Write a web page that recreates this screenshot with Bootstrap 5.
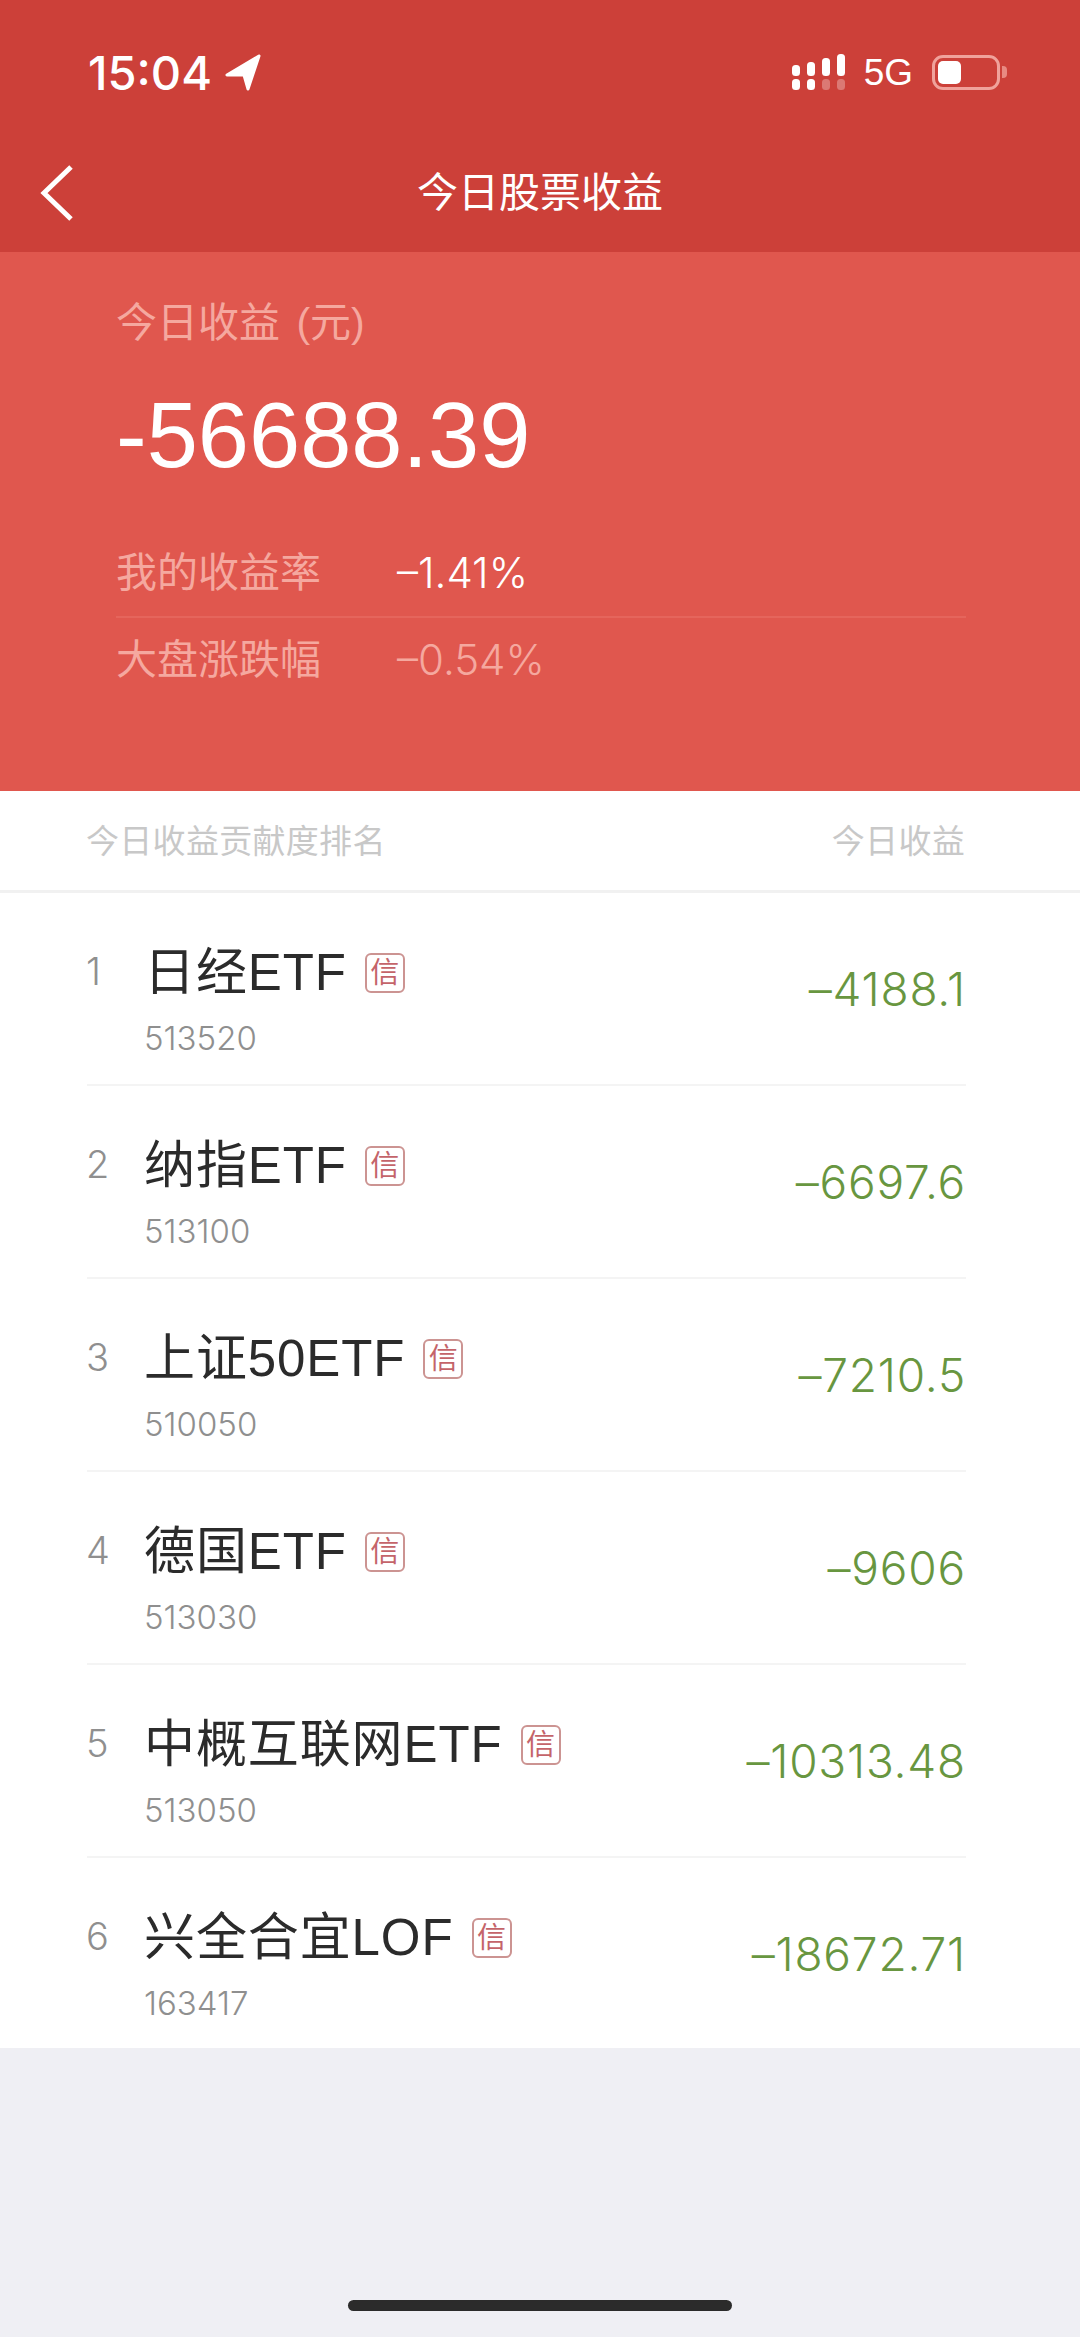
<!DOCTYPE html>
<html lang="zh-CN">
<head>
    <meta charset="UTF-8">
    <meta name="viewport" content="width=device-width, initial-scale=1.0">
    <title>今日股票收益</title>
    <link href="https://cdn.jsdelivr.net/npm/bootstrap@5.3.0/dist/css/bootstrap.min.css" rel="stylesheet">
    <style>
        body { background: #efeff4; font-family: "Liberation Sans", "Noto Sans CJK SC", sans-serif; height: 2337px; overflow: hidden; }
        .top-red { background: #cc4039; height: 252px; color: #fff; }
        .status-line { height: 144px; padding: 0 73px 0 88px; }
        .clock { font-family: Inter, "Liberation Sans", sans-serif; font-size: 47px; font-weight: 500; line-height: 1; }
        .arrow-mark { margin-left: 11px; }
        .net-type { font-size: 37px; line-height: 1; margin: 0 19px 0 16px; }
        .batt { width: 68px; height: 35px; border: 3px solid #f0a29b; border-radius: 11px; padding: 3px; }
        .batt-level { width: 23px; background: #fff; border-radius: 5px; }
        .batt-nub { width: 5px; height: 12px; background: #e88a82; border-radius: 0 4px 4px 0; margin-left: 2px; }
        .nav-line { height: 108px; padding-bottom: 10px; }
        .back-btn { left: 40px; top: 21px; }
        .nav-title { font-size: 41px; line-height: 1; }
        .hero { background: #e0574e; height: 539px; padding: 46px 114px 0 116px; }
        .hero-label { font-size: 41px; line-height: 50px; color: #f5a89f; word-spacing: 5px; }
        .hero-sum { font-size: 92px; line-height: 100px; margin-top: 37px; color: #fff; }
        .hero-rows { margin-top: 45px; }
        .hero-row { height: 88px; font-size: 42px; }
        .hero-row + .hero-row { height: 84px; }
        .hero-row .hero-label { width: 281px; }
        .hero-div { border-bottom: 2px solid #e5655c; }
        .rate { font-family: Inter, "Liberation Sans", sans-serif; font-weight: 300; line-height: 50px; color: #fff; }
        .rate-dim { color: #f5a89f; }
        .rank-head { background: #fff; height: 102px; padding: 3px 115px 0 86px; border-bottom: 3px solid #f1f1f1; font-size: 33px; letter-spacing: .3px; color: #c8c8c8; }
        .stock-list { border-radius: 0; background: #fff; }
        .stock-list .stock-row { height: 193px; margin: 0 114px 0 87px; padding: 0; border-width: 0 0 2px; border-color: #f4f4f4; background: transparent; }
        .stock-list .stock-row:last-child { height: 190px; border-width: 0; }
        .rank-no { width: 57px; padding-top: 48px; margin-left: -1px; margin-right: 1px; font-family: Inter, "Liberation Sans", sans-serif; font-weight: 300; font-size: 38px; line-height: 60px; color: #8f8f8f; }
        .stock-name { height: 60px; margin-top: 50px; font-size: 51px; letter-spacing: .9px; line-height: 60px; color: #2b2b2b; }
        .credit-tag { width: 40px; height: 40px; margin-left: 18px; border: 2px solid #cc9492; border-radius: 6px; font-size: 29px; letter-spacing: 0; line-height: 1; color: #c4646a; }
        .stock-code { margin-top: 15px; font-family: Inter, "Liberation Sans", sans-serif; font-weight: 300; font-size: 33px; line-height: 40px; color: #8f8f8f; }
        .gain { padding-top: 2px; font-family: Inter, "Liberation Sans", sans-serif; font-weight: 300; font-size: 46px; letter-spacing: .8px; color: #689640; }
        .home-bar { width: 384px; height: 11px; border-radius: 6px; background: #2b2b2b; margin-bottom: 26px; }
    </style>
</head>
<body class="d-flex flex-column">
    <div class="top-red flex-shrink-0">
        <div class="status-line d-flex align-items-center">
            <span class="clock">15:04</span>
            <svg class="arrow-mark" width="40" height="38" viewBox="0 0 40 38"><path d="M36 3 4 22 21 22 25 36Z" fill="#fff" stroke="#fff" stroke-width="3" stroke-linejoin="round"/></svg>
            <div class="ms-auto d-flex align-items-center">
                <svg width="56" height="38" viewBox="0 0 56 38">
                    <g fill="#fff">
                        <rect x="0" y="12" width="8" height="11" rx="3.500"/>
                        <rect x="15" y="9" width="8" height="14" rx="3.500"/>
                        <rect x="30" y="5" width="8" height="18" rx="3.500"/>
                        <rect x="45" y="1" width="8" height="22" rx="3.500"/>
                        <rect x="0" y="26" width="8" height="11" rx="3.500"/>
                        <rect x="15" y="26" width="8" height="11" rx="3.500"/>
                        <rect x="30" y="26" width="8" height="11" rx="3.500" opacity=".3"/>
                        <rect x="45" y="26" width="8" height="11" rx="3.500" opacity=".3"/>
                    </g>
                </svg>
                <span class="net-type">5G</span>
                <div class="batt d-flex"><div class="batt-level"></div></div>
                <div class="batt-nub"></div>
            </div>
        </div>
        <div class="nav-line position-relative d-flex align-items-center justify-content-center">
            <svg class="back-btn position-absolute" width="34" height="56" viewBox="0 0 34 56"><path d="M31 2 4 28 31 54" fill="none" stroke="#fff" stroke-width="5"/></svg>
            <span class="nav-title">今日股票收益</span>
        </div>
    </div>

    <div class="hero flex-shrink-0">
        <div class="hero-label">今日收益 (元)</div>
        <div class="hero-sum">-56688.39</div>
        <div class="hero-rows">
            <div class="hero-row hero-div d-flex align-items-center">
                <span class="hero-label">我的收益率</span>
                <span class="rate">–1.41%</span>
            </div>
            <div class="hero-row d-flex align-items-center">
                <span class="hero-label">大盘涨跌幅</span>
                <span class="rate rate-dim">–0.54%</span>
            </div>
        </div>
    </div>

    <div class="rank-head flex-shrink-0 d-flex align-items-center justify-content-between">
        <span>今日收益贡献度排名</span>
        <span>今日收益</span>
    </div>

    <div class="bg-white flex-shrink-0">
        <ul class="stock-list list-group list-group-flush">
            <li class="stock-row list-group-item d-flex">
                <div class="rank-no">1</div>
                <div>
                    <div class="stock-name d-flex align-items-center">日经ETF<span class="credit-tag d-flex align-items-center justify-content-center">信</span></div>
                    <div class="stock-code">513520</div>
                </div>
                <div class="gain ms-auto align-self-center">–4188.1</div>
            </li>
            <li class="stock-row list-group-item d-flex">
                <div class="rank-no">2</div>
                <div>
                    <div class="stock-name d-flex align-items-center">纳指ETF<span class="credit-tag d-flex align-items-center justify-content-center">信</span></div>
                    <div class="stock-code">513100</div>
                </div>
                <div class="gain ms-auto align-self-center">–6697.6</div>
            </li>
            <li class="stock-row list-group-item d-flex">
                <div class="rank-no">3</div>
                <div>
                    <div class="stock-name d-flex align-items-center">上证50ETF<span class="credit-tag d-flex align-items-center justify-content-center">信</span></div>
                    <div class="stock-code">510050</div>
                </div>
                <div class="gain ms-auto align-self-center">–7210.5</div>
            </li>
            <li class="stock-row list-group-item d-flex">
                <div class="rank-no">4</div>
                <div>
                    <div class="stock-name d-flex align-items-center">德国ETF<span class="credit-tag d-flex align-items-center justify-content-center">信</span></div>
                    <div class="stock-code">513030</div>
                </div>
                <div class="gain ms-auto align-self-center">–9606</div>
            </li>
            <li class="stock-row list-group-item d-flex">
                <div class="rank-no">5</div>
                <div>
                    <div class="stock-name d-flex align-items-center">中概互联网ETF<span class="credit-tag d-flex align-items-center justify-content-center">信</span></div>
                    <div class="stock-code">513050</div>
                </div>
                <div class="gain ms-auto align-self-center">–10313.48</div>
            </li>
            <li class="stock-row list-group-item d-flex">
                <div class="rank-no">6</div>
                <div>
                    <div class="stock-name d-flex align-items-center">兴全合宜LOF<span class="credit-tag d-flex align-items-center justify-content-center">信</span></div>
                    <div class="stock-code">163417</div>
                </div>
                <div class="gain ms-auto align-self-center">–18672.71</div>
            </li>
        </ul>
    </div>

    <div class="home-bar mt-auto mx-auto flex-shrink-0"></div>

    <script src="https://cdn.jsdelivr.net/npm/bootstrap@5.3.0/dist/js/bootstrap.bundle.min.js"></script>
</body>
</html>
